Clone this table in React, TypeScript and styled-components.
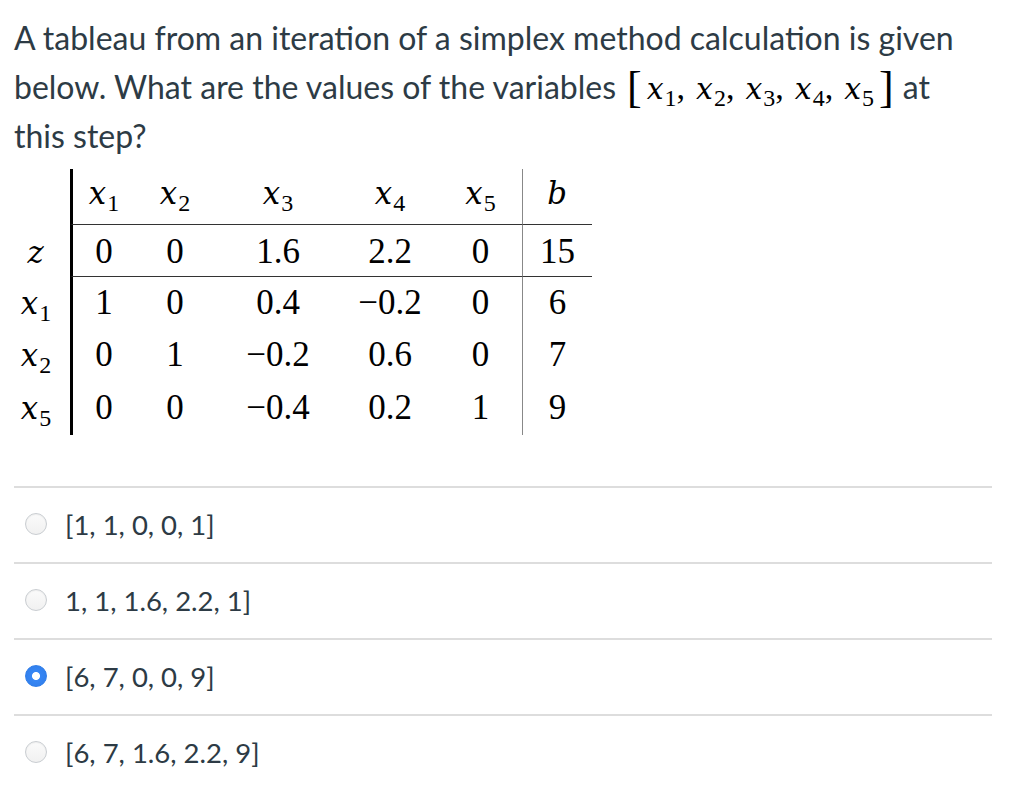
import React from "react";
import styled, { createGlobalStyle } from "styled-components";

const GlobalStyle = createGlobalStyle`
  html, body { margin: 0; padding: 0; background: #ffffff; }
  body { font-family: Lato, "Open Sans", sans-serif; color: #2d3b45; }
`;

const Page = styled.div`
  width: 978px;
  padding: 13px 0 0 14px;
`;

const Question = styled.p`
  margin: 0;
  max-width: 962px;
  font-size: 32px;
  line-height: 49px;
  color: #2d3b45;
`;

const InlineMath = styled.span`
  font-family: "Liberation Serif", "Times New Roman", serif;
  font-size: 34px;
  line-height: 0;
  color: #000;
  margin-right: 9px;
`;

const Bracket = styled.span<{ $close?: boolean }>`
  font-family: "Liberation Serif", serif;
  font-style: normal;
  font-size: 44px;
  line-height: 0;
  position: relative;
  top: 3px;
  margin: ${(p) => (p.$close ? "0 0 0 5px" : "0 5px 0 11px")};
`;

const Var = styled.span`
  font-family: "DejaVu Serif", serif;
  font-style: italic;
  font-size: 0.88em;
  padding-right: 1px;
`;

const Sub = styled.span`
  font-size: 24px;
  font-style: normal;
  line-height: 0;
  vertical-align: -7px;
`;

const Comma = styled.span`
  margin-right: 11px;
`;

const Tableau = styled.div`
  display: grid;
  grid-template-columns: 56px 65px 80px 126px 98px 83px 70px;
  margin-top: 9px;
  font-family: "Liberation Serif", "Times New Roman", serif;
  font-size: 35px;
  color: #000;
`;

const Cell = styled.div<{ $h: number; $b: number; $kind: "label" | "first" | "mid" | "last" | "b"; $rule?: boolean }>`
  box-sizing: border-box;
  height: ${(p) => p.$h}px;
  line-height: ${(p) => 2 * (p.$b - 11.8)}px;
  text-align: center;
  white-space: nowrap;
  padding-right: ${(p) => (p.$kind === "label" ? 12 : 0)}px;
  border-left: ${(p) => (p.$kind === "first" ? "3px solid #000" : p.$kind === "b" ? "1px solid #888" : "none")};
  border-bottom: ${(p) => (p.$rule && p.$kind !== "label" ? "1px solid #333" : "none")};
  overflow: visible;
`;

const Options = styled.div`
  margin-top: 51px;
  display: flex;
  flex-direction: column;
`;

const Option = styled.label`
  display: flex;
  align-items: center;
  gap: 18px;
  height: 76px;
  box-sizing: border-box;
  border-top: 2px solid #dddddd;
  padding: 0 0 2px 11px;
  font-size: 27.5px;
  color: #2d3b45;
`;

const Radio = styled.span<{ $checked?: boolean }>`
  box-sizing: border-box;
  width: 22px;
  height: 22px;
  border-radius: 50%;
  flex-shrink: 0;
  border: 1px solid ${(p) => (p.$checked ? "#2f7de9" : "#c9cdd1")};
  background: ${(p) =>
    p.$checked
      ? "radial-gradient(circle at 50% 50%, #ffffff 0 3.6px, #3786f4 4.4px, #2f7de9 100%)"
      : "linear-gradient(#fbfbfb, #f1f1f1)"};
  box-shadow: ${(p) => (p.$checked ? "none" : "inset 0 1px 1px rgba(0,0,0,0.05)")};
`;

type K = "label" | "first" | "mid" | "last" | "b";
const kinds: K[] = ["label", "first", "mid", "mid", "mid", "last", "b"];

const X = ({ n }: { n: string }) => (
  <>
    <Var>x</Var>
    <Sub>{n}</Sub>
  </>
);

const rows: { h: number; b: number; rule?: boolean; cells: React.ReactNode[] }[] = [
  { h: 56, b: 36, rule: true, cells: ["", <X n="1" />, <X n="2" />, <X n="3" />, <X n="4" />, <X n="5" />, <Var>b</Var>] },
  { h: 52, b: 39, rule: true, cells: [<Var>z</Var>, "0", "0", "1.6", "2.2", "0", "15"] },
  { h: 54, b: 38, cells: [<X n="1" />, "1", "0", "0.4", "\u22120.2", "0", "6"] },
  { h: 52, b: 36, cells: [<X n="2" />, "0", "1", "\u22120.2", "0.6", "0", "7"] },
  { h: 52, b: 37, cells: [<X n="5" />, "0", "0", "\u22120.4", "0.2", "1", "9"] },
];

const options = [
  { text: "[1, 1, 0, 0, 1]" },
  { text: "1, 1, 1.6, 2.2, 1]" },
  { text: "[6, 7, 0, 0, 9]", checked: true },
  { text: "[6, 7, 1.6, 2.2, 9]" },
];

export default function App() {
  return (
    <>
      <GlobalStyle />
      <Page>
        <Question>
          A tableau from an iteration of a simplex method calculation is given below. What are the values of the
          variables
          <InlineMath>
            <Bracket>[</Bracket>
            <X n="1" />
            <Comma>,</Comma>
            <X n="2" />
            <Comma>,</Comma>
            <X n="3" />
            <Comma>,</Comma>
            <X n="4" />
            <Comma>,</Comma>
            <X n="5" />
            <Bracket $close>]</Bracket>
          </InlineMath>
          at this step?
        </Question>
        <Tableau>
          {rows.map((r, ri) =>
            r.cells.map((c, ci) => (
              <Cell key={`${ri}-${ci}`} $h={r.h} $b={r.b} $kind={kinds[ci]} $rule={r.rule}>
                {c}
              </Cell>
            ))
          )}
        </Tableau>
        <Options>
          {options.map((o, i) => (
            <Option key={i}>
              <Radio $checked={o.checked} />
              <span>{o.text}</span>
            </Option>
          ))}
        </Options>
      </Page>
    </>
  );
}
